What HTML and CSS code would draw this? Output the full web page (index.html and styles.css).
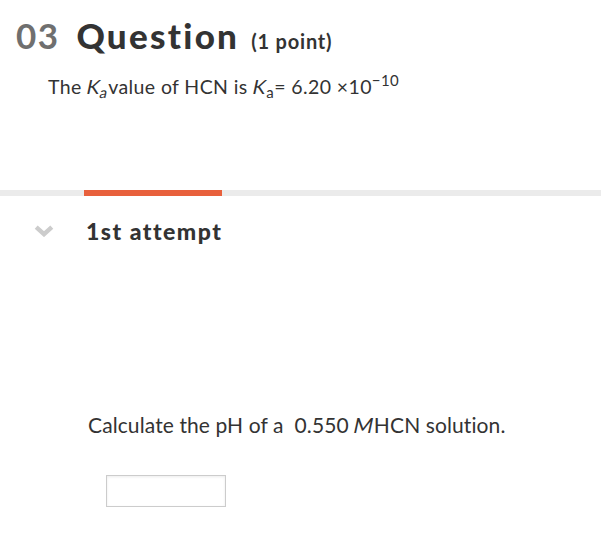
FILE: index.html
```html
<!DOCTYPE html>
<html>
<head>
<meta charset="utf-8">
<link rel="stylesheet" href="styles.css">
</head>
<body>
<div class="page">
  <header class="qhead">
    <span class="qnum">03</span>
    <span class="qtitle">Question</span>
    <span class="qpts">(1 point)</span>
  </header>
  <p class="stem">The <span class="var">K</span><sub class="var">a</sub>value of HCN is <span class="var">K</span><sub>a</sub>= 6.20 ×10<sup>−10</sup></p>
  <div class="tabs"><div class="tab-active"></div></div>
  <div class="attempt">
    <svg class="chev" width="20" height="12" viewBox="0 0 20 12"><path d="M2.2 2.2 L10 9.2 L17.8 2.2" fill="none" stroke="#cccccc" stroke-width="4.4" stroke-linejoin="miter"/></svg>
    <span class="attempt-title">1st attempt</span>
  </div>
  <div class="part">
    <p class="prompt">Calculate the pH of a &nbsp;0.550 <span class="var">M</span>HCN solution.</p>
    <div class="answer"><input type="text" class="answer-box"></div>
  </div>
</div>
</body>
</html>
```
FILE: styles.css
```css
* { box-sizing: border-box; }
html, body { margin: 0; padding: 0; background: #fff; }
body { font-family: Lato, "Open Sans", sans-serif; color: #333; }
.page { width: 601px; height: 546px; overflow: hidden; }
.qhead { display: flex; align-items: baseline; padding: 14px 0 0 16px; height: 58px; }
.qnum { font-weight: 700; font-size: 35px; color: #6f6f6f; margin-right: 17px; letter-spacing: 0.04em; }
.qtitle { font-weight: 900; font-size: 35px; color: #333; margin-right: 12px; letter-spacing: 0.065em; }
.qpts { font-weight: 700; font-size: 20px; color: #333; letter-spacing: 0.04em; }
.stem { margin: 17px 0 0 48px; font-size: 19.5px; line-height: 24px; color: #333; letter-spacing: 0.02em; }
.var { display: inline-block; transform: skewX(-12deg); }
.stem sub { font-size: 15px; vertical-align: -4px; line-height: 0; }
.stem sup { font-size: 15px; vertical-align: 8px; line-height: 0; }
.tabs { margin-top: 91px; height: 6px; background: #ebebeb; }
.tab-active { margin-left: 84px; width: 138px; height: 6px; background: #e8603c; }
.attempt { display: flex; align-items: center; margin-top: 19px; height: 32px; }
.chev { margin-left: 34px; margin-right: 32px; }
.attempt-title { font-weight: 900; font-size: 23px; color: #333; letter-spacing: 0.065em; }
.part { padding-left: 88px; margin-top: 166px; }
.prompt { margin: 0; font-size: 21px; line-height: 24px; color: #333; letter-spacing: 0.005em; }
.answer { margin-top: 38px; padding-left: 18px; }
.answer-box { display: block; width: 120px; height: 32px; border: 1px solid #cccccc; box-shadow: inset 0 1px 3px rgba(0,0,0,0.08); background: #fff; margin: 0; padding: 0; }
```
